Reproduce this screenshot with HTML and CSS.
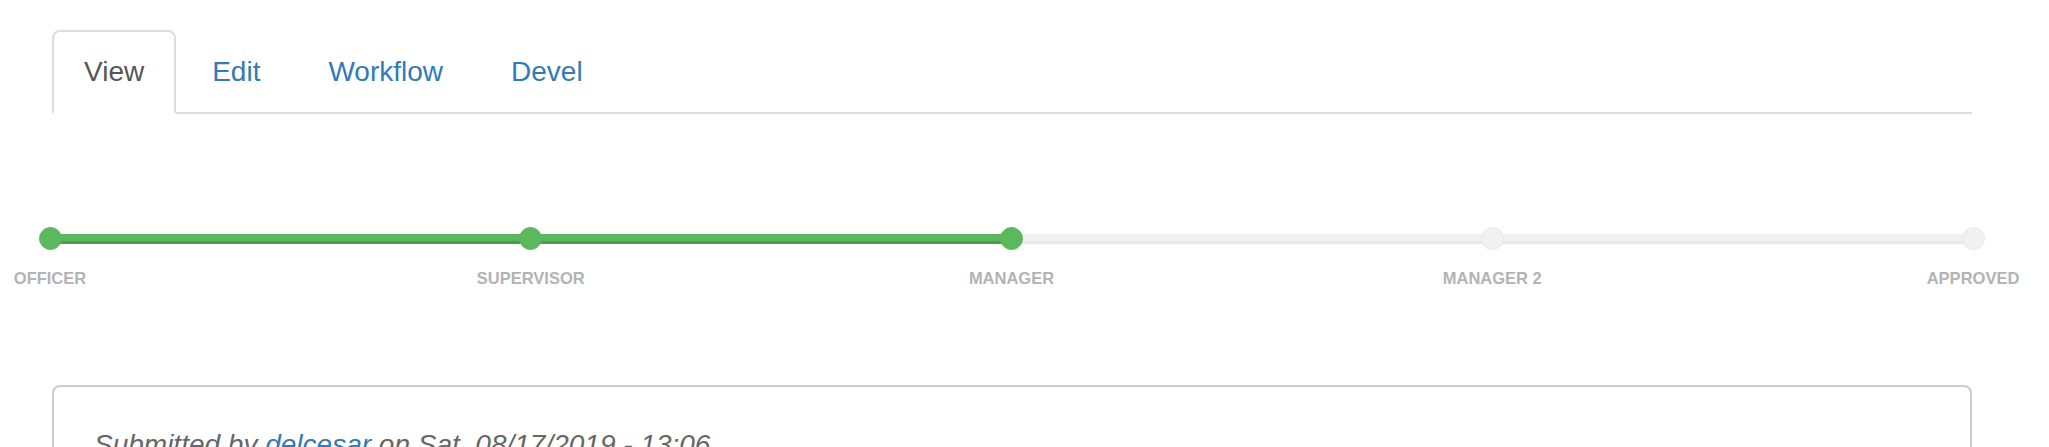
FILE: index.html
```html
<!DOCTYPE html>
<html lang="en">
<head>
<meta charset="utf-8">
<title>Node view</title>
<link rel="stylesheet" href="styles.css">
</head>
<body>
<div class="page">
  <ul class="tabs">
    <li class="tab active"><a href="#">View</a></li>
    <li class="tab"><a href="#">Edit</a></li>
    <li class="tab"><a href="#">Workflow</a></li>
    <li class="tab"><a href="#">Devel</a></li>
  </ul>

  <div class="track">
    <div class="step done"><span class="dot"></span><span class="label">OFFICER</span></div>
    <div class="seg done"></div>
    <div class="step done"><span class="dot"></span><span class="label">SUPERVISOR</span></div>
    <div class="seg done"></div>
    <div class="step done"><span class="dot"></span><span class="label">MANAGER</span></div>
    <div class="seg"></div>
    <div class="step"><span class="dot"></span><span class="label">MANAGER 2</span></div>
    <div class="seg"></div>
    <div class="step"><span class="dot"></span><span class="label">APPROVED</span></div>
  </div>

  <div class="card">
    <p class="submitted">Submitted by <a href="#">delcesar</a> on Sat, 08/17/2019 - 13:06</p>
  </div>
</div>
</body>
</html>
```
FILE: styles.css
```css
html, body {
  margin: 0;
  padding: 0;
  background: #fff;
}

body {
  font-family: "Liberation Sans", Arial, Helvetica, sans-serif;
  color: #333;
}

.page {
  padding: 30px 77px 0 52px;
}

.tabs {
  display: flex;
  list-style: none;
  margin: 0;
  padding: 0;
  border-bottom: 2px solid #ddd;
}

.tab {
  margin-right: 4px;
  margin-bottom: -2px;
}

.tab a {
  display: block;
  padding: 20px 30px;
  font-size: 28px;
  line-height: 40px;
  border: 2px solid transparent;
  border-radius: 8px 8px 0 0;
  color: #337ab7;
  text-decoration: none;
}

.tab.active a {
  color: #555;
  background: #fff;
  border-color: #ddd #ddd transparent;
}

.track {
  display: flex;
  align-items: flex-start;
  margin: 113px -1px 0 -2px;
}

.step {
  width: 0;
  display: flex;
  flex-direction: column;
  align-items: center;
}

.dot {
  position: relative;
  z-index: 1;
  flex-shrink: 0;
  width: 23px;
  height: 23px;
  border-radius: 50%;
  box-sizing: border-box;
  background: #f1f1f1;
  border: 1px solid #e8e8e8;
}

.step.done .dot {
  background: #5cb85c;
  border-color: #5cb85c;
}

.label {
  margin-top: 18px;
  white-space: nowrap;
  font-size: 16.5px;
  line-height: 20px;
  font-weight: bold;
  color: #b3b3b3;
}

.seg {
  flex: 1;
  height: 10px;
  margin-top: 7px;
  background: #f1f1f1;
  box-shadow: inset 0 -3px 0 rgba(0, 0, 0, 0.03);
}

.seg.done {
  background: #5cb85c;
  box-shadow: inset 0 -3px 0 rgba(0, 0, 0, 0.15);
}

.card {
  margin-top: 97px;
  border: 2px solid #ccc;
  border-radius: 8px;
  padding: 38px 40px;
  min-height: 200px;
}

.submitted {
  margin: 0;
  font-size: 28px;
  line-height: 40px;
  font-style: italic;
  color: #666;
}

.submitted a {
  color: #337ab7;
  text-decoration: none;
}
```
